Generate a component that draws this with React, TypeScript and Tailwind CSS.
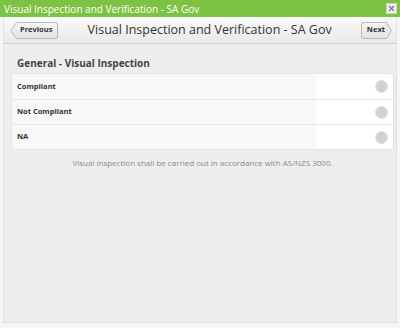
import React from 'react';

export default function App() {
  const options = ['Compliant', 'Not Compliant', 'NA'];

  return (
    <div
      className="w-[400px] h-[328px] flex flex-col bg-[#f6f6f6] overflow-hidden"
      style={{ fontFamily: '"Open Sans", "Liberation Sans", sans-serif' }}
    >
      {/* Window title bar */}
      <div className="h-[17px] flex items-center justify-between bg-[#7dc242] pl-[4px] pr-[3px]">
        <span className="text-[10px] leading-none text-white">Visual Inspection and Verification - SA Gov</span>
        <div className="w-[11px] h-[11px] bg-[#f4f4f4] border border-[#cfcfcf] flex items-center justify-center">
          <svg width="7" height="7" viewBox="0 0 7 7">
            <path d="M1 1L6 6M6 1L1 6" stroke="#777" strokeWidth="1.2" />
          </svg>
        </div>
      </div>

      <div className="flex-1 flex flex-col mx-[3px] mb-[5px] bg-[#eeeeee] border-x border-b border-[#e2e2e2]">
        {/* Toolbar */}
        <div className="h-[27px] flex items-center justify-between pl-[6px] pr-[4px] bg-gradient-to-b from-[#fafafa] to-[#e9e9e9] border-b border-[#d4d4d4]">
          <div className="relative h-[17px] flex items-center">
            <svg width="8" height="17" viewBox="0 0 8 17" className="-mr-px">
              <path d="M8 0.5H6.5L0.8 8.5L6.5 16.5H8" fill="#ececec" stroke="#b9b9b9" />
            </svg>
            <div className="h-[17px] flex items-center pl-[3px] pr-[5px] bg-gradient-to-b from-[#f7f7f7] to-[#e3e3e3] border border-l-0 border-[#b9b9b9] rounded-r-[3px] text-[7.5px] font-bold text-[#333]">
              Previous
            </div>
          </div>
          <span className="text-[12.5px] text-[#333]">Visual Inspection and Verification - SA Gov</span>
          <div className="relative h-[17px] flex items-center">
            <div className="h-[17px] flex items-center pl-[5px] pr-[1px] bg-gradient-to-b from-[#f7f7f7] to-[#e3e3e3] border border-r-0 border-[#b9b9b9] rounded-l-[3px] text-[7.5px] font-bold text-[#333]">
              Next
            </div>
            <svg width="7" height="17" viewBox="0 0 7 17" className="-ml-px">
              <path d="M0 0.5H1.5L6.4 8.5L1.5 16.5H0" fill="#e8e8e8" stroke="#b9b9b9" />
            </svg>
          </div>
        </div>

        {/* Content */}
        <div className="pl-[7px] pr-[2px] pt-[14px]">
          <div className="pl-[6px] text-[10px] font-bold text-[#444] leading-none mb-[5px]">General - Visual Inspection</div>
          <div className="bg-white rounded-[4px] border border-[#e4e4e4] overflow-hidden">
            {options.map((opt, i) => (
              <div key={opt} className={`flex h-[25px] ${i > 0 ? 'border-t border-[#e6e6e6]' : ''}`}>
                <div className="flex-1 flex items-center pl-[5px] bg-[#f8f8f8] text-[7.5px] font-bold text-[#333]">{opt}</div>
                <div className="w-[77px] flex items-center justify-end pr-[5px]">
                  <div className="w-[13px] h-[13px] rounded-full bg-[#d2d2d2] border border-[#e0e0e0]" />
                </div>
              </div>
            ))}
          </div>
          <p className="text-center text-[8px] text-[#8a8a8a] mt-[7px]">
            Visual inspection shall be carried out in accordance with AS/NZS 3000.
          </p>
        </div>
      </div>
    </div>
  );
}
